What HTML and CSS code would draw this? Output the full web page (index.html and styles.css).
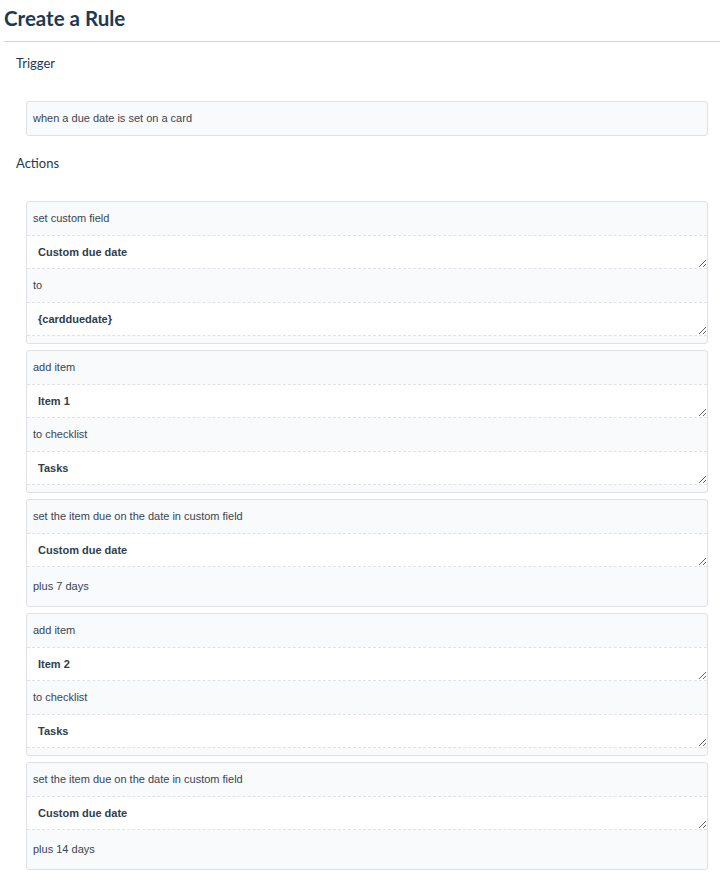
FILE: index.html
```html
<html>
<head>
<meta charset="utf-8">
<link rel="stylesheet" href="styles.css">
</head>
<body>

  <div class="page-header">
    <h1 class="page-title">Create a Rule</h1>
  </div>

  <div class="section">
    <div class="section-title">Trigger</div>
    <div class="trigger">when a due date is set on a card</div>
  </div>

  <div class="section">
    <div class="section-title">Actions</div>

    <div class="action">
      <div class="label">set custom field</div>
      <textarea class="field">Custom due date</textarea>
      <div class="label">to</div>
      <textarea class="field">{cardduedate}</textarea>
    </div>

    <div class="action">
      <div class="label">add item</div>
      <textarea class="field">Item 1</textarea>
      <div class="label">to checklist</div>
      <textarea class="field">Tasks</textarea>
    </div>

    <div class="action">
      <div class="label">set the item due on the date in custom field</div>
      <textarea class="field">Custom due date</textarea>
      <div class="label">plus 7 days</div>
    </div>

    <div class="action">
      <div class="label">add item</div>
      <textarea class="field">Item 2</textarea>
      <div class="label">to checklist</div>
      <textarea class="field">Tasks</textarea>
    </div>

    <div class="action">
      <div class="label">set the item due on the date in custom field</div>
      <textarea class="field">Custom due date</textarea>
      <div class="label">plus 14 days</div>
    </div>
  </div>

</body>
</html>
```

FILE: styles.css
```css
body {
  margin: 0;
  background-color: white;
  font-family: "Liberation Sans", Arial, sans-serif;
  color: #3a4450;
}

.page-header {
  margin-left: 4px;
  height: 41px;
  border-bottom: 1px solid #d0d4d9;
}

.page-title {
  margin: 0;
  padding-top: 3px;
  font-family: Lato, sans-serif;
  font-size: 20.5px;
  font-weight: 700;
  line-height: 30px;
  color: #1d3a53;
}

.section {
  padding: 0 12px 0 16px;
}

.section-title {
  margin-top: 11px;
  margin-bottom: 28px;
  font-family: Lato, sans-serif;
  font-size: 13px;
  line-height: 20px;
  color: #1d3a53;
}

.section + .section .section-title {
  margin-top: 17px;
}

.trigger,
.action {
  margin-left: 10px;
  background-color: #f9fafc;
  border: 1px solid #dfe1e6;
  border-radius: 3px;
}

.trigger {
  height: 33px;
  padding-left: 6px;
  font-size: 11px;
  line-height: 33px;
}

.action {
  margin-bottom: 6px;
}

.label {
  height: 33px;
  padding-left: 6px;
  font-size: 11px;
  line-height: 33px;
}

.label:last-child {
  height: 39px;
  line-height: 39px;
}

.field {
  display: block;
  box-sizing: border-box;
  width: 100%;
  height: 34px;
  margin: 0;
  padding: 9px 11px 0 11px;
  border: none;
  border-top: 1px dashed #dfe1e6;
  border-bottom: 1px dashed #dfe1e6;
  border-radius: 0;
  background-color: white;
  font-family: "Liberation Sans", Arial, sans-serif;
  font-size: 11px;
  font-weight: 700;
  line-height: 14px;
  color: #2f3e4c;
  resize: vertical;
  overflow: hidden;
  outline: none;
}

.field:last-child {
  margin-bottom: 7px;
}
```
